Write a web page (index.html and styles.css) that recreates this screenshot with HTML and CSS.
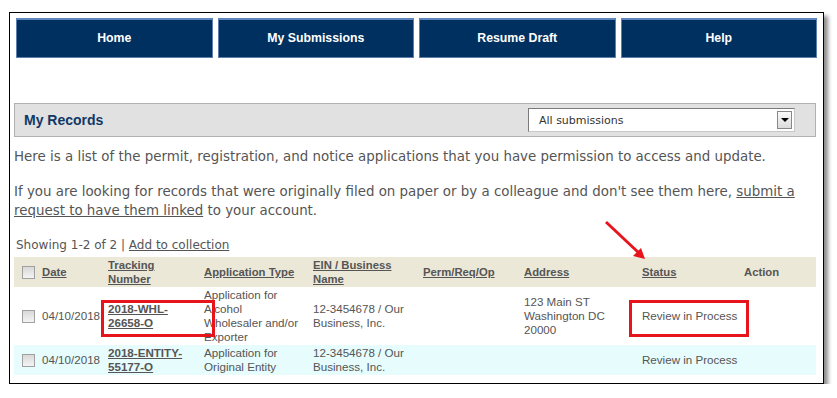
FILE: index.html
```html
<!DOCTYPE html>
<html lang="en">
<head>
    <meta charset="UTF-8">
    <title>My Records</title>
    <link rel="stylesheet" href="styles.css">
</head>
<body>
    <div class="frame">
        <!-- main navigation -->
        <div class="nav">
            <a class="nav-btn" href="#">Home</a>
            <a class="nav-btn" href="#">My Submissions</a>
            <a class="nav-btn" href="#">Resume Draft</a>
            <a class="nav-btn" href="#">Help</a>
        </div>

        <div class="records-bar">
            <h2>My Records</h2>
            <div class="select">
                <span>All submissions</span>
                <span class="select-btn"></span>
            </div>
        </div>

        <p class="intro">Here is a list of the permit, registration, and notice applications that you have permission to access and update.</p>
        <p class="intro">If you are looking for records that were originally filed on paper or by a colleague and don't see them here, <a href="#">submit a</a><br><a href="#">request to have them linked</a> to your account.</p>

        <div class="showing">Showing 1-2 of 2 | <a href="#">Add to collection</a></div>

        <table class="records">
            <colgroup>
                <col style="width:24px">
                <col style="width:66px">
                <col style="width:96px">
                <col style="width:109px">
                <col style="width:110px">
                <col style="width:101px">
                <col style="width:118px">
                <col style="width:102px">
                <col style="width:76px">
            </colgroup>
            <thead>
                <tr>
                    <th class="cb"><input type="checkbox"></th>
                    <th><a href="#">Date</a></th>
                    <th><a href="#">Tracking Number</a></th>
                    <th><a href="#">Application Type</a></th>
                    <th><a href="#">EIN / Business Name</a></th>
                    <th><a href="#">Perm/Req/Op</a></th>
                    <th><a href="#">Address</a></th>
                    <th><a href="#">Status</a></th>
                    <th>Action</th>
                </tr>
            </thead>
            <tbody>
                <tr>
                    <td class="cb"><input type="checkbox"></td>
                    <td>04/10/2018</td>
                    <td><a class="track" href="#">2018-WHL-26658-O</a></td>
                    <td>Application for<br>Alcohol<br>Wholesaler and/or<br>Exporter</td>
                    <td>12-3454678 / Our Business, Inc.</td>
                    <td></td>
                    <td>123 Main ST<br>Washington DC<br>20000</td>
                    <td class="status">Review in Process</td>
                    <td></td>
                </tr>
                <tr class="alt">
                    <td class="cb"><input type="checkbox"></td>
                    <td>04/10/2018</td>
                    <td><a class="track" href="#">2018-ENTITY-55177-O</a></td>
                    <td>Application for Original Entity</td>
                    <td>12-3454678 / Our Business, Inc.</td>
                    <td></td>
                    <td></td>
                    <td class="status">Review in Process</td>
                    <td></td>
                </tr>
            </tbody>
        </table>

        <!-- annotations drawn over the screenshot -->
        <span class="mark mark-track"></span>
        <span class="mark mark-status"></span>
        <svg class="arrow" width="50" height="45" viewBox="0 0 50 45">
            <line x1="6" y1="4" x2="40" y2="36" stroke="#e8141b" stroke-width="3"/>
            <polygon points="45,41 33,38 41,30" fill="#e8141b"/>
        </svg>
    </div>
</body>
</html>
```

FILE: styles.css
```css
body {
    margin: 0;
    background-color: #fff;
    font-family: "DejaVu Sans", Verdana, sans-serif;
}
.frame {
    position: relative;
    margin: 12px 0 0 9px;
    width: 802px;
    padding: 5px 7px 8px 4px;
    border: 1px solid #000;
    box-shadow: 4px 4px 4px rgba(0, 0, 0, 0.45);
}
.nav {
    display: flex;
    gap: 5px;
    margin-left: 2px;
    margin-right: -1px;
}
.nav-btn {
    flex: 1;
    height: 37px;
    line-height: 37px;
    background-color: #00305f;
    border: 1px solid #5d7fae;
    border-top: 2px solid #5d86bd;
    color: #fff;
    text-align: center;
    text-decoration: none;
    font-family: "Liberation Sans", Arial, sans-serif;
    font-weight: bold;
    font-size: 12.3px;
}
.records-bar {
    display: flex;
    align-items: center;
    justify-content: space-between;
    margin-top: 45px;
    height: 32px;
    background-color: #e1e1e1;
    border: 1px solid #b1b1b1;
}
.records-bar h2 {
    margin: 0 0 0 9px;
    font-family: "Liberation Sans", Arial, sans-serif;
    font-size: 14px;
    color: #123865;
}
.select {
    display: flex;
    align-items: center;
    justify-content: space-between;
    width: 265px;
    height: 22px;
    margin-right: 20px;
    background-color: #fff;
    border: 1px solid #c8c8c8;
    border-top-color: #7a7a7a;
    border-left-color: #7a7a7a;
    font-size: 11px;
    color: #333;
}
.select span:first-child {
    padding-left: 10px;
}
.select-btn {
    position: relative;
    width: 13px;
    height: 16px;
    margin-right: 2px;
    border: 1px solid #888;
    background: linear-gradient(#fafafa, #dcdcdc);
}
.select-btn::after {
    content: "";
    position: absolute;
    left: 3px;
    top: 6px;
    border-left: 4px solid transparent;
    border-right: 4px solid transparent;
    border-top: 4px solid #000;
}
.intro {
    margin: 10px 0 16px 0;
    font-size: 13.4px;
    line-height: 19px;
    color: #555;
}
.intro a, .showing a {
    color: #555;
}
.showing {
    margin-top: 17px;
    padding-left: 2px;
    font-size: 12px;
    color: #555;
    line-height: 16px;
}
.records {
    width: 802px;
    margin-top: 4px;
    table-layout: fixed;
    border-collapse: collapse;
    font-family: "Liberation Sans", Arial, sans-serif;
    font-size: 11.6px;
    color: #555;
}
.records th {
    height: 30px;
    padding: 0 4px;
    background-color: #ece8d8;
    text-align: left;
    line-height: 14px;
    vertical-align: middle;
    font-weight: bold;
    font-size: 11.3px;
}
.records th a {
    color: #555;
}
.records td {
    padding: 1px 4px;
    line-height: 14px;
    vertical-align: middle;
}
.records td.status {
    white-space: nowrap;
}
.records tbody tr:first-child td {
    height: 56px;
}
.records tr.alt td {
    height: 26px;
    background-color: #e6fcfd;
}
.records .cb {
    padding: 0 0 0 8px;
}
.records input[type="checkbox"] {
    appearance: none;
    display: block;
    width: 13px;
    height: 13px;
    margin: 0;
    border: 1px solid #a0a0a0;
    background: linear-gradient(#d8d8d8, #f4f4f4);
}
.track {
    font-weight: bold;
    color: #555;
}
.mark {
    position: absolute;
    border: 3px solid #e8141b;
}
.mark-track {
    left: 91px;
    top: 287px;
    width: 108px;
    height: 31px;
}
.mark-status {
    left: 619px;
    top: 287px;
    width: 114px;
    height: 31px;
}
.arrow {
    position: absolute;
    left: 590px;
    top: 205px;
}
```
